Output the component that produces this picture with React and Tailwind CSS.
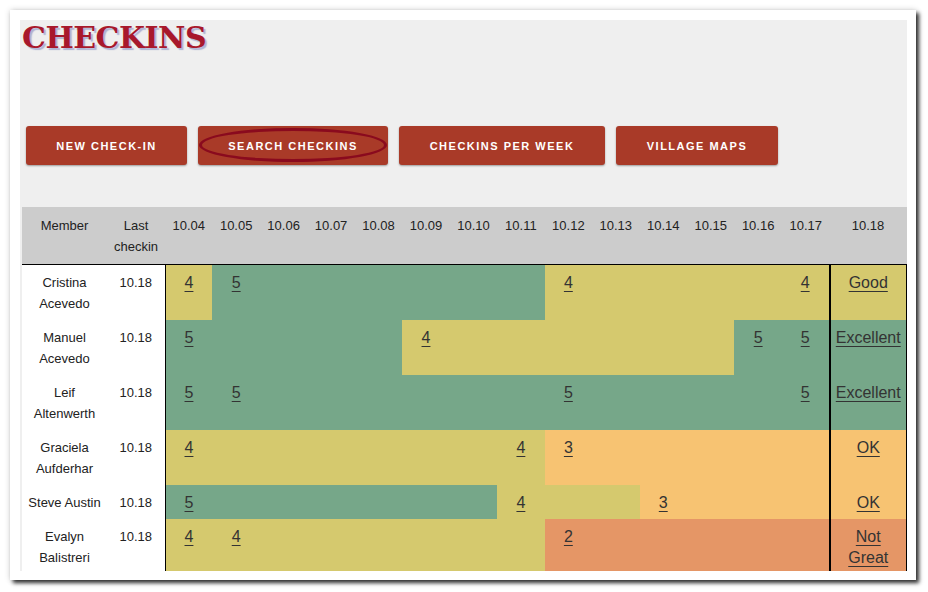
import React from "react";

const dates = ["10.04", "10.05", "10.06", "10.07", "10.08", "10.09", "10.10", "10.11", "10.12", "10.13", "10.14", "10.15", "10.16", "10.17"];

const bg = {
  G: "bg-[#76a789]",
  Y: "bg-[#d5c96e]",
  O: "bg-[#f7c372]",
  R: "bg-[#e59666]",
};

const rows = [
  { name: "Cristina Acevedo", last: "10.18", colors: "YGGGGGGGYYYYYY", values: { 0: 4, 1: 5, 8: 4, 13: 4 }, rating: "Good", rc: "Y" },
  { name: "Manuel Acevedo", last: "10.18", colors: "GGGGGYYYYYYYGG", values: { 0: 5, 5: 4, 12: 5, 13: 5 }, rating: "Excellent", rc: "G" },
  { name: "Leif Altenwerth", last: "10.18", colors: "GGGGGGGGGGGGGG", values: { 0: 5, 1: 5, 8: 5, 13: 5 }, rating: "Excellent", rc: "G" },
  { name: "Graciela Aufderhar", last: "10.18", colors: "YYYYYYYYOOOOOO", values: { 0: 4, 7: 4, 8: 3 }, rating: "OK", rc: "O" },
  { name: "Steve Austin", last: "10.18", colors: "GGGGGGGYYYOOOO", values: { 0: 5, 7: 4, 10: 3 }, rating: "OK", rc: "O" },
  { name: "Evalyn Balistreri", last: "10.18", colors: "YYYYYYYYRRRRRR", values: { 0: 4, 1: 4, 8: 2 }, rating: "Not\nGreat", rc: "R" },
];

const buttons = [
  { label: "NEW CHECK-IN", w: "w-[161px]" },
  { label: "SEARCH CHECKINS", w: "w-[190px]", focus: true },
  { label: "CHECKINS PER WEEK", w: "w-[206px]" },
  { label: "VILLAGE MAPS", w: "w-[162px]" },
];

const App = () => {
  return (
    <div className="min-h-screen bg-white pt-[10px] pl-[10px] font-['Liberation_Sans',Arial,sans-serif]">
      <div className="w-[906px] h-[570px] bg-white pt-[10px] pl-[10px] pr-[9px] pb-[9px] shadow-[3px_3px_4px_rgba(0,0,0,0.8),0_0_6px_rgba(0,0,0,0.18)]">
        <div className="h-[551px] bg-[#efefef] overflow-hidden">
          <h1 className="pt-[1px] pl-[2px] text-[30px] leading-[34px] font-bold tracking-[-0.5px] text-[#a8182c] font-['DejaVu_Serif',serif] [text-shadow:2px_2px_1px_rgba(120,130,190,0.55)]">
            CHECKINS
          </h1>

          <div className="flex gap-[11px] ml-[6px] mt-[71px]">
            {buttons.map((b) => (
              <button
                key={b.label}
                className={`relative ${b.w} h-[39px] pt-[1px] rounded-[3px] bg-[#a93a28] text-white text-[11px] font-bold tracking-[1.5px] shadow-[0_1px_2px_rgba(0,0,0,0.35)]`}
              >
                {b.label}
                {b.focus && (
                  <span className="absolute left-[1px] right-[1px] top-[2px] bottom-[3px] rounded-[50%] border-[3px] border-[#8a0a1e]"></span>
                )}
              </button>
            ))}
          </div>

          <table className="table-fixed w-[885px] ml-[2px] mt-[42px] text-[13px] leading-[21px] text-[#222]">
            <colgroup>
              <col className="w-[85px]" />
              <col className="w-[58px]" />
              {dates.map((d) => (
                <col key={d} />
              ))}
              <col className="w-[77px]" />
            </colgroup>
            <thead>
              <tr className="bg-[#cccccc]">
                <th className="font-normal align-top pt-[8px] pb-[7px] px-[4px] border-b border-black">Member</th>
                <th className="font-normal align-top pt-[8px] pb-[7px] px-[4px] border-b border-black">Last checkin</th>
                {dates.map((d) => (
                  <th key={d} className="font-normal align-top pt-[8px] pb-[7px] px-0 border-b border-black">
                    {d}
                  </th>
                ))}
                <th className="font-normal align-top pt-[8px] pb-[7px] px-0 border-b border-black">10.18</th>
              </tr>
            </thead>
            <tbody>
              {rows.map((r) => (
                <tr key={r.name}>
                  <td className="bg-white text-center align-top pt-[7px] pb-[6px] px-[4px]">{r.name}</td>
                  <td className="bg-white text-center align-top pt-[7px] pb-[6px] px-[4px]">{r.last}</td>
                  {dates.map((d, i) => (
                    <td
                      key={d}
                      className={`${bg[r.colors[i]]} text-center align-top pt-[7px] pb-[6px] px-0 text-[16px] text-[#333] ${i === 0 ? "border-l border-black" : ""} ${i === 13 ? "border-r-2 border-black" : ""}`}
                    >
                      {r.values[i] !== undefined && <a className="underline underline-offset-[3px] cursor-pointer">{r.values[i]}</a>}
                    </td>
                  ))}
                  <td className={`${bg[r.rc]} text-center align-top pt-[7px] pb-[6px] px-[2px] text-[16px] text-[#333] border-r border-black`}>
                    {r.rating.split("\n").map((t, k) => (
                      <React.Fragment key={k}>
                        {k > 0 && <br />}
                        <a className="underline underline-offset-[3px] cursor-pointer">{t}</a>
                      </React.Fragment>
                    ))}
                  </td>
                </tr>
              ))}
            </tbody>
          </table>
        </div>
      </div>
    </div>
  );
};

export default App;
